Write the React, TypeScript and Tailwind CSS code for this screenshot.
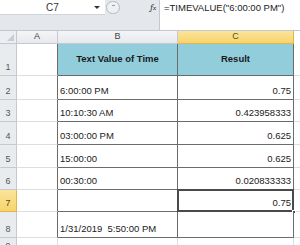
import React from 'react';

const rows: { h: string; b: string; c: string }[] = [
  { h: 'h-[24px]', b: '6:00:00 PM', c: '0.75' },
  { h: 'h-[22px]', b: '10:10:30 AM', c: '0.423958333' },
  { h: 'h-[23px]', b: '03:00:00 PM', c: '0.625' },
  { h: 'h-[23px]', b: '15:00:00', c: '0.625' },
  { h: 'h-[22px]', b: '00:30:00', c: '0.020833333' },
  { h: 'h-[22px]', b: '', c: '0.75' },
  { h: 'h-[26px]', b: '1/31/2019  5:50:00 PM', c: '' },
];

export default function App() {
  return (
    <div className="w-[300px] h-[245px] overflow-hidden bg-white text-[#222]" style={{ fontFamily: '"Liberation Sans", Arial, sans-serif' }}>
      {/* formula bar */}
      <div className="flex h-[31px] border-b border-[#c3c8cf] bg-[#e4e7eb]">
        <div className="flex flex-col w-[159px]">
          <div className="flex h-[15px]">
            <div className="relative flex items-center justify-center w-[105px] bg-white border-b border-[#cfd3d8] text-[10px] text-[#333]">
              C7
              <span className="absolute right-[5px] top-[6px] w-0 h-0 border-l-[3px] border-r-[3px] border-t-[3px] border-l-transparent border-r-transparent border-t-[#333]" />
            </div>
            <div className="flex flex-1 items-center">
              <div className="ml-[1px] w-[14px] h-[13px] rounded-full border border-[#b5bac1] bg-[#eef0f2] flex items-center justify-center">
                <span className="w-[3px] h-[1px] bg-[#9aa0a8] -mt-[4px]" />
              </div>
              <span className="ml-auto mr-[3px] text-[9px] italic font-serif text-[#333]">f<span className="text-[7px]">x</span></span>
            </div>
          </div>
          <div className="flex-1" />
        </div>
        <div className="flex-1 bg-white border-l border-[#c3c8cf] pl-[4px] pt-[2px] text-[9.5px] leading-[12px] text-[#222]">
          =TIMEVALUE("6:00:00 PM")
        </div>
      </div>

      {/* column headers */}
      <div className="flex h-[13px] text-[9px] text-[#444]">
        <div className="relative w-[17px] bg-[#eceef1] border-r border-b border-[#c6cad0]">
          <span className="absolute right-[2px] bottom-[2px] w-0 h-0 border-l-[7px] border-t-[7px] border-l-transparent border-t-transparent border-b-0 border-r-0" style={{ borderRightWidth: 0 }} />
          <span className="absolute right-[2px] bottom-[2px] w-0 h-0 border-b-[7px] border-l-[7px] border-b-[#c9cdd2] border-l-transparent" />
        </div>
        <div className="w-[41px] flex items-center justify-center bg-gradient-to-b from-[#f4f5f7] to-[#e6e9ed] border-r border-b border-[#c6cad0]">A</div>
        <div className="w-[120px] flex items-center justify-center bg-gradient-to-b from-[#f4f5f7] to-[#e6e9ed] border-r border-b border-[#c6cad0]">B</div>
        <div className="w-[116px] flex items-center justify-center bg-gradient-to-b from-[#fbe49a] to-[#f7d46c] border-r border-b border-[#e2b54a] text-[#5a4a1a]">C</div>
        <div className="flex-1 bg-white" />
      </div>

      {/* row 1 header */}
      <div className="flex h-[32px] text-[9.5px]">
        <div className="w-[17px] flex items-end justify-center pb-[1px] bg-[#e9ecef] border-r border-b border-[#c6cad0] text-[9px] text-[#555]">1</div>
        <div className="w-[41px] border-r border-b border-r-[#6b6b6b] border-b-[#dcdee2]" />
        <div className="w-[120px] flex items-center justify-center bg-[#92cddc] border-r border-b border-[#6b6b6b] font-bold text-[#1a1a1a]">Text Value of Time</div>
        <div className="w-[116px] flex items-center justify-center bg-[#92cddc] border-r border-b border-[#6b6b6b] font-bold text-[#1a1a1a]">Result</div>
        <div className="flex-1 border-b border-[#dcdee2]" />
      </div>

      {rows.map((r, i) => {
        const n = i + 2;
        const sel = n === 7;
        return (
          <div key={n} className={`flex ${r.h} text-[9.5px]`}>
            <div className={`w-[17px] flex items-end justify-center pb-[1px] border-r border-b text-[9px] ${sel ? 'bg-gradient-to-b from-[#fbe49a] to-[#f7d46c] border-[#e2b54a] text-[#5a4a1a]' : 'bg-[#e9ecef] border-[#c6cad0] text-[#555]'}`}>{n}</div>
            <div className="w-[41px] border-r border-b border-r-[#6b6b6b] border-b-[#dcdee2]" />
            <div className="w-[120px] flex items-end pl-[2px] pb-[1px] border-r border-b border-[#6b6b6b] whitespace-pre text-[#1a1a1a]">{r.b}</div>
            <div className="relative w-[116px] flex items-end justify-end pr-[2px] pb-[1px] border-r border-b border-[#6b6b6b] text-[#1a1a1a]">
              {r.c}
              {sel && (
                <>
                  <span className="absolute -left-[1px] -top-[1px] -right-[1px] -bottom-[1px] border-2 border-[#4a4a4a]" />
                  <span className="absolute -right-[3px] -bottom-[3px] w-[4px] h-[4px] bg-[#4a4a4a] border border-white" />
                </>
              )}
            </div>
            <div className="flex-1 border-b border-[#dcdee2]" />
          </div>
        );
      })}

      {/* row 9 partial */}
      <div className="flex h-[10px] text-[9px]">
        <div className="w-[17px] flex items-start justify-center bg-[#e9ecef] border-r border-[#c6cad0] text-[#555] leading-[10px] pt-[3px]">9</div>
        <div className="w-[41px] border-r border-[#dcdee2]" />
        <div className="w-[120px] border-r border-[#dcdee2]" />
        <div className="w-[116px] border-r border-[#dcdee2]" />
        <div className="flex-1" />
      </div>
    </div>
  );
}
